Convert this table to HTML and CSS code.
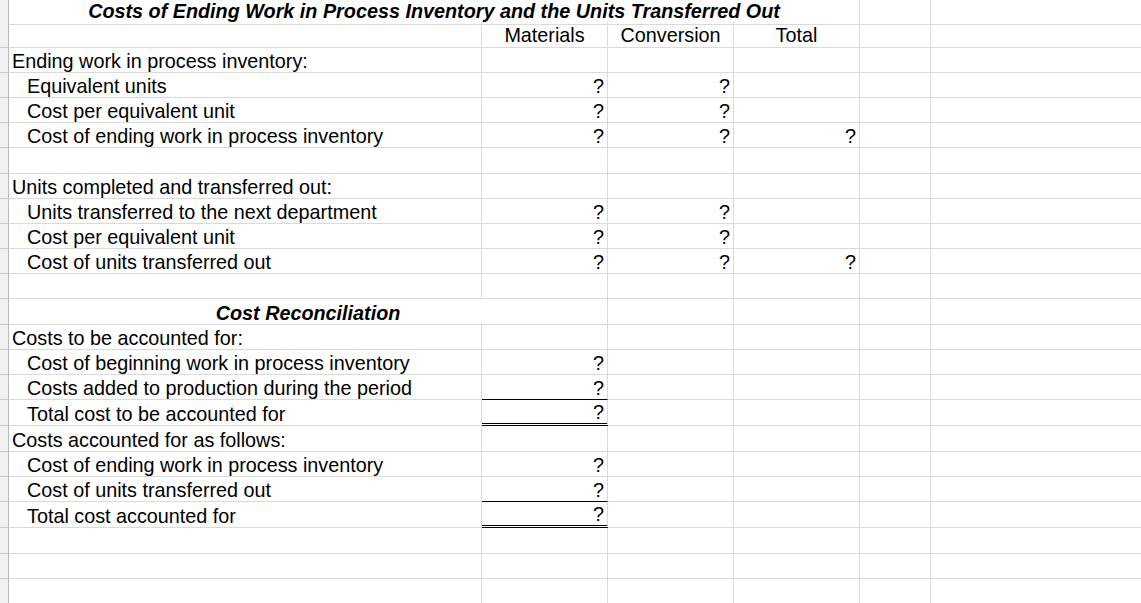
FILE: index.html
```html
<!DOCTYPE html>
<html>
<head>
<meta charset="utf-8">
<title>Costs of Ending Work in Process Inventory</title>
<link rel="stylesheet" href="styles.css">
</head>
<body>
<div class="sheet">
  <div class="row r-top">
    <div class="hd"></div>
    <div class="c span4 center bi title">Costs of Ending Work in Process Inventory and the Units Transferred Out</div>
    <div class="c"></div>
    <div class="c last"></div>
  </div>
  <div class="row h26">
    <div class="hd"></div>
    <div class="c"></div>
    <div class="c center head">Materials</div>
    <div class="c center head">Conversion</div>
    <div class="c center head">Total</div>
    <div class="c"></div>
    <div class="c last"></div>
  </div>
  <div class="row">
    <div class="hd"></div>
    <div class="c lbl">Ending work in process inventory:</div>
    <div class="c"></div><div class="c"></div><div class="c"></div><div class="c"></div><div class="c last"></div>
  </div>
  <div class="row">
    <div class="hd"></div>
    <div class="c lbl ind">Equivalent units</div>
    <div class="c num">?</div><div class="c num">?</div><div class="c"></div><div class="c"></div><div class="c last"></div>
  </div>
  <div class="row">
    <div class="hd"></div>
    <div class="c lbl ind">Cost per equivalent unit</div>
    <div class="c num">?</div><div class="c num">?</div><div class="c"></div><div class="c"></div><div class="c last"></div>
  </div>
  <div class="row">
    <div class="hd"></div>
    <div class="c lbl ind">Cost of ending work in process inventory</div>
    <div class="c num">?</div><div class="c num">?</div><div class="c num">?</div><div class="c"></div><div class="c last"></div>
  </div>
  <div class="row h26">
    <div class="hd"></div>
    <div class="c"></div><div class="c"></div><div class="c"></div><div class="c"></div><div class="c"></div><div class="c last"></div>
  </div>
  <div class="row">
    <div class="hd"></div>
    <div class="c lbl">Units completed and transferred out:</div>
    <div class="c"></div><div class="c"></div><div class="c"></div><div class="c"></div><div class="c last"></div>
  </div>
  <div class="row">
    <div class="hd"></div>
    <div class="c lbl ind">Units transferred to the next department</div>
    <div class="c num">?</div><div class="c num">?</div><div class="c"></div><div class="c"></div><div class="c last"></div>
  </div>
  <div class="row">
    <div class="hd"></div>
    <div class="c lbl ind">Cost per equivalent unit</div>
    <div class="c num">?</div><div class="c num">?</div><div class="c"></div><div class="c"></div><div class="c last"></div>
  </div>
  <div class="row">
    <div class="hd"></div>
    <div class="c lbl ind">Cost of units transferred out</div>
    <div class="c num">?</div><div class="c num">?</div><div class="c num">?</div><div class="c"></div><div class="c last"></div>
  </div>
  <div class="row">
    <div class="hd"></div>
    <div class="c"></div><div class="c"></div><div class="c"></div><div class="c"></div><div class="c"></div><div class="c last"></div>
  </div>
  <div class="row h26">
    <div class="hd"></div>
    <div class="c span2 center bi">Cost Reconciliation</div>
    <div class="c"></div><div class="c"></div><div class="c"></div><div class="c last"></div>
  </div>
  <div class="row">
    <div class="hd"></div>
    <div class="c lbl">Costs to be accounted for:</div>
    <div class="c"></div><div class="c"></div><div class="c"></div><div class="c"></div><div class="c last"></div>
  </div>
  <div class="row">
    <div class="hd"></div>
    <div class="c lbl ind">Cost of beginning work in process inventory</div>
    <div class="c num">?</div><div class="c"></div><div class="c"></div><div class="c"></div><div class="c last"></div>
  </div>
  <div class="row">
    <div class="hd"></div>
    <div class="c lbl ind">Costs added to production during the period</div>
    <div class="c num under">?</div><div class="c"></div><div class="c"></div><div class="c"></div><div class="c last"></div>
  </div>
  <div class="row h26">
    <div class="hd"></div>
    <div class="c lbl ind">Total cost to be accounted for</div>
    <div class="c num dbl">?</div><div class="c"></div><div class="c"></div><div class="c"></div><div class="c last"></div>
  </div>
  <div class="row h26">
    <div class="hd"></div>
    <div class="c lbl">Costs accounted for as follows:</div>
    <div class="c"></div><div class="c"></div><div class="c"></div><div class="c"></div><div class="c last"></div>
  </div>
  <div class="row">
    <div class="hd"></div>
    <div class="c lbl ind">Cost of ending work in process inventory</div>
    <div class="c num">?</div><div class="c"></div><div class="c"></div><div class="c"></div><div class="c last"></div>
  </div>
  <div class="row">
    <div class="hd"></div>
    <div class="c lbl ind">Cost of units transferred out</div>
    <div class="c num under">?</div><div class="c"></div><div class="c"></div><div class="c"></div><div class="c last"></div>
  </div>
  <div class="row h26">
    <div class="hd"></div>
    <div class="c lbl ind">Total cost accounted for</div>
    <div class="c num dbl">?</div><div class="c"></div><div class="c"></div><div class="c"></div><div class="c last"></div>
  </div>
  <div class="row h26">
    <div class="hd"></div>
    <div class="c"></div><div class="c"></div><div class="c"></div><div class="c"></div><div class="c"></div><div class="c last"></div>
  </div>
  <div class="row">
    <div class="hd"></div>
    <div class="c"></div><div class="c"></div><div class="c"></div><div class="c"></div><div class="c"></div><div class="c last"></div>
  </div>
  <div class="row">
    <div class="hd"></div>
    <div class="c"></div><div class="c"></div><div class="c"></div><div class="c"></div><div class="c"></div><div class="c last"></div>
  </div>
</div>
</body>
</html>
```

FILE: styles.css
```css
html, body {
  margin: 0;
  padding: 0;
  background: #ffffff;
  overflow: hidden;
}

.sheet {
  width: 1141px;
  height: 603px;
  overflow: hidden;
  font-family: "Liberation Sans", Arial, sans-serif;
  font-size: 19.8px;
  color: #000000;
}

.row {
  display: grid;
  grid-template-columns: 9px 473px 126px 126px 126px 71px 400px;
  height: 25px;
}

.row.h26 {
  height: 26px;
}

.row.r-top {
  height: 22px;
}

.hd {
  background: #f0f0f0;
  border-right: 1px solid #b9b9b9;
  border-bottom: 1px solid #c9c9c9;
  box-sizing: border-box;
}

.c {
  box-sizing: border-box;
  border-right: 1px solid #dadada;
  border-bottom: 1px solid #dadada;
  display: flex;
  align-items: flex-end;
  line-height: 22px;
  white-space: nowrap;
  padding: 0 3px;
  min-width: 0;
}

.c.last {
  border-right: none;
}

.span4 {
  grid-column: span 4;
}

.span2 {
  grid-column: span 2;
}

.center {
  justify-content: center;
}

.bi {
  font-weight: bold;
  font-style: italic;
}

.title {
  padding-bottom: 2px;
}

.head {
  padding-bottom: 1px;
}

.lbl {
  padding-left: 3px;
}

.ind {
  padding-left: 18px;
}

.num {
  justify-content: flex-end;
  padding-right: 3px;
}

.under {
  border-bottom: 1px solid #000000;
}

.dbl {
  border-bottom: 3px double #000000;
}
```
